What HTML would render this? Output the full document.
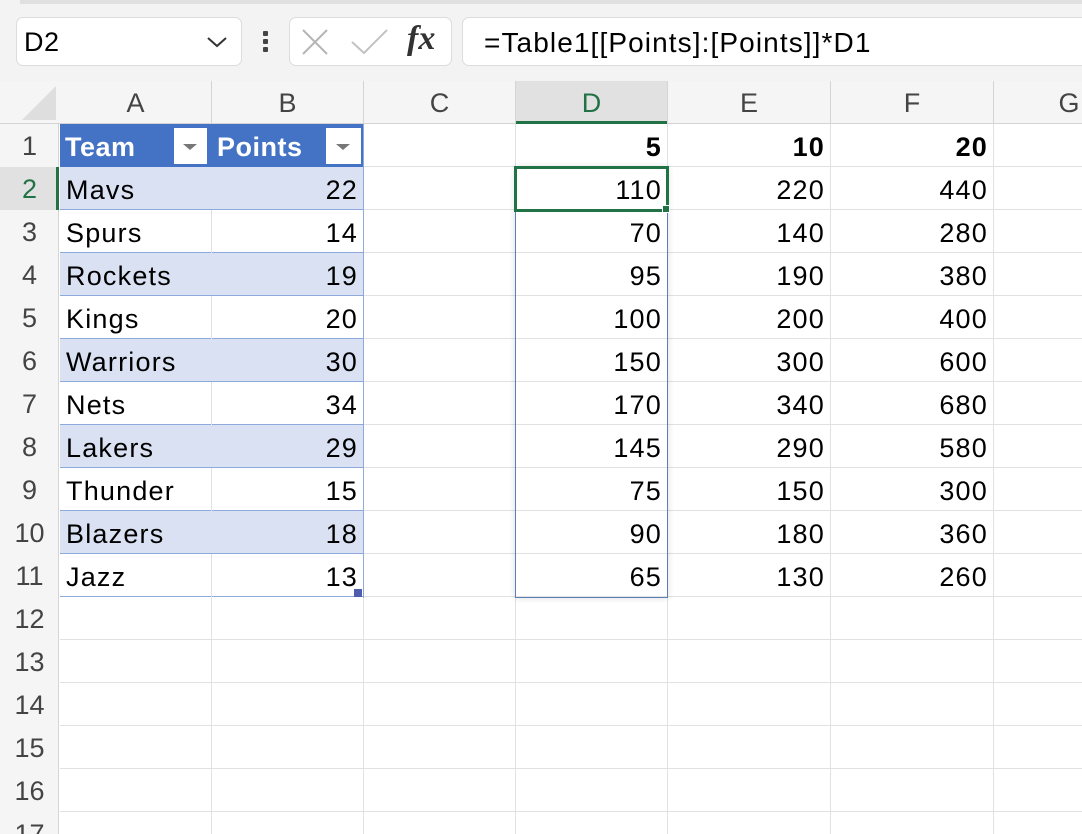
<!DOCTYPE html>
<html><head><meta charset="utf-8"><style>
*{margin:0;padding:0;box-sizing:border-box}
html,body{width:1082px;height:834px;overflow:hidden}
body{background:#fff;font-family:"Liberation Sans",sans-serif;position:relative}
.top{position:absolute;left:0;top:0;width:1082px;height:81px;background:#f3f3f3}
.topline{position:absolute;left:20px;top:0;width:1062px;height:4px;background:#e0e0e0}
.box{position:absolute;background:#fff;border:1px solid #dcdcdc;border-radius:7px}
.t{position:absolute;font-size:27px;letter-spacing:1.2px;color:#000;line-height:43px;white-space:nowrap}
.r{text-align:right}
.h{position:absolute;color:#444;font-size:27px;text-align:center;line-height:43px}
.vl{position:absolute;width:1px;background:#e1e1e1}
.hl{position:absolute;height:1px;background:#e1e1e1}
</style></head><body>
<div class="top"></div><div class="topline"></div>
<div class="box" style="left:16px;top:17px;width:226px;height:49px"></div>
<div class="t" style="left:24px;top:21px;font-size:27px;letter-spacing:0.5px">D2</div>
<svg style="position:absolute;left:206px;top:35px" width="22" height="14"><path d="M2 3 L11 11 L20 3" stroke="#333" stroke-width="2" fill="none"/></svg>
<div style="position:absolute;left:263px;top:31px;width:5px;height:5px;background:#444;border-radius:1px"></div>
<div style="position:absolute;left:263px;top:39px;width:5px;height:5px;background:#444;border-radius:1px"></div>
<div style="position:absolute;left:263px;top:47px;width:5px;height:5px;background:#444;border-radius:1px"></div>
<div class="box" style="left:289px;top:17px;width:163px;height:49px"></div>
<svg style="position:absolute;left:300px;top:28px" width="30" height="28"><path d="M3 2 L27 26 M27 2 L3 26" stroke="#b5b5b5" stroke-width="2"/></svg>
<svg style="position:absolute;left:350px;top:28px" width="40" height="28"><path d="M2 14 L14 25 L37 2" stroke="#c2c2c2" stroke-width="2" fill="none"/></svg>
<div style="position:absolute;left:407px;top:20px;font-family:'Liberation Serif',serif;font-style:italic;font-weight:bold;font-size:34px;color:#333">fx</div>
<div class="box" style="left:462px;top:17px;width:640px;height:49px"></div>
<div class="t" style="left:484px;top:21px;font-size:28px;letter-spacing:1.1px">=Table1[[Points]:[Points]]*D1</div>

<div style="position:absolute;left:0;top:81px;width:1082px;height:43px;background:#f5f5f5;border-bottom:1px solid #d4d4d4"></div>
<div style="position:absolute;left:0;top:124px;width:59px;height:710px;background:#f5f5f5;border-right:1px solid #d4d4d4"></div>
<svg style="position:absolute;left:20px;top:84px" width="38" height="38"><path d="M36 2 L36 36 L2 36 Z" fill="#dedede"/></svg>
<div style="position:absolute;left:516px;top:81px;width:152px;height:43px;background:#e1e1e1;border-bottom:3px solid #217346"></div>
<div style="position:absolute;left:0;top:167px;width:59px;height:43px;background:#e1e1e1;border-right:3px solid #217346"></div>
<div class="vl" style="left:211px;top:81px;height:43px;background:#d4d4d4"></div>
<div class="vl" style="left:363px;top:81px;height:43px;background:#d4d4d4"></div>
<div class="vl" style="left:515px;top:81px;height:43px;background:#d4d4d4"></div>
<div class="vl" style="left:667px;top:81px;height:43px;background:#d4d4d4"></div>
<div class="vl" style="left:830px;top:81px;height:43px;background:#d4d4d4"></div>
<div class="vl" style="left:993px;top:81px;height:43px;background:#d4d4d4"></div>
<div class="h" style="left:60px;top:82px;width:151px">A</div>
<div class="h" style="left:212px;top:82px;width:151px">B</div>
<div class="h" style="left:364px;top:82px;width:151px">C</div>
<div class="h" style="left:516px;top:82px;width:151px;color:#217346">D</div>
<div class="h" style="left:668px;top:82px;width:162px">E</div>
<div class="h" style="left:831px;top:82px;width:162px">F</div>
<div class="h" style="left:994px;top:82px;width:150px">G</div>

<div class="vl" style="left:211px;top:124px;height:710px"></div>
<div class="vl" style="left:363px;top:124px;height:710px"></div>
<div class="vl" style="left:515px;top:124px;height:710px"></div>
<div class="vl" style="left:667px;top:124px;height:710px"></div>
<div class="vl" style="left:830px;top:124px;height:710px"></div>
<div class="vl" style="left:993px;top:124px;height:710px"></div>
<div id="g"></div>

<div style="position:absolute;left:60px;top:124px;width:304px;height:43px;background:#4472c4"></div>
<div style="position:absolute;left:174px;top:128px;width:33px;height:36px;background:#fff"></div>
<div style="position:absolute;left:326px;top:128px;width:35px;height:36px;background:#fff"></div>
<svg style="position:absolute;left:182px;top:143px" width="16" height="8"><path d="M1 1 L15 1 L8 7Z" fill="#777"/></svg>
<svg style="position:absolute;left:335px;top:143px" width="16" height="8"><path d="M1 1 L15 1 L8 7Z" fill="#777"/></svg>
<div class="t" style="left:65px;top:126px;color:#fff;font-weight:bold;letter-spacing:0.5px">Team</div>
<div class="t" style="left:217px;top:126px;color:#fff;font-weight:bold;letter-spacing:0.5px">Points</div>
<div id="tb"></div>
<div style="position:absolute;left:354px;top:589px;width:8px;height:8px;background:#4e5db0"></div>

<div style="position:absolute;left:515px;top:167px;width:153px;height:431px;border:1px solid #5b7fb8;box-shadow:0 0 6px rgba(0,0,0,.15)"></div>
<div style="position:absolute;left:514px;top:166px;width:155px;height:46px;border:3px solid #217346"></div>
<div style="position:absolute;left:662px;top:205px;width:8px;height:8px;background:#217346;border:1px solid #fff"></div>
<div id="d"></div>
<script>
var g='',i,y;
for(i=1;i<=17;i++){y=124+(i-1)*43;
g+='<div class="hl" style="left:60px;top:'+(y+42)+'px;width:1022px"></div>';
g+='<div class="h" style="left:0;top:'+(y+1)+'px;width:59px;'+(i==2?'color:#217346':'')+'">'+i+'</div>';}
document.getElementById('g').innerHTML=g;
var T=[['Mavs',22],['Spurs',14],['Rockets',19],['Kings',20],['Warriors',30],['Nets',34],['Lakers',29],['Thunder',15],['Blazers',18],['Jazz',13]];
var s='';
T.forEach(function(r,k){y=167+k*43;
if(k%2==0)s+='<div style="position:absolute;left:60px;top:'+y+'px;width:304px;height:43px;background:#d9e1f2;border-bottom:1px solid #8ea9db"></div>';
else s+='<div style="position:absolute;left:60px;top:'+y+'px;width:304px;height:43px;border-bottom:1px solid #8ea9db;border-right:1px solid #8ea9db"></div><div class="vl" style="left:211px;top:'+y+'px;height:43px"></div>';
s+='<div class="t" style="left:66px;top:'+(y+2)+'px">'+r[0]+'</div>';
s+='<div class="t r" style="left:212px;width:146px;top:'+(y+2)+'px">'+r[1]+'</div>';});
s+='<div class="vl" style="left:363px;top:124px;height:474px;background:#8ea9db"></div>';
document.getElementById('tb').innerHTML=s;
var D=[110,70,95,100,150,170,145,75,90,65],x='';
x+='<div class="t r" style="left:516px;width:146px;top:126px;font-weight:bold">5</div>';
x+='<div class="t r" style="left:668px;width:157px;top:126px;font-weight:bold">10</div>';
x+='<div class="t r" style="left:831px;width:157px;top:126px;font-weight:bold">20</div>';
D.forEach(function(v,k){y=169+k*43;
x+='<div class="t r" style="left:516px;width:146px;top:'+y+'px">'+v+'</div>';
x+='<div class="t r" style="left:668px;width:157px;top:'+y+'px">'+(v*2)+'</div>';
x+='<div class="t r" style="left:831px;width:157px;top:'+y+'px">'+(v*4)+'</div>';});
document.getElementById('d').innerHTML=x;
</script>
</body></html>
